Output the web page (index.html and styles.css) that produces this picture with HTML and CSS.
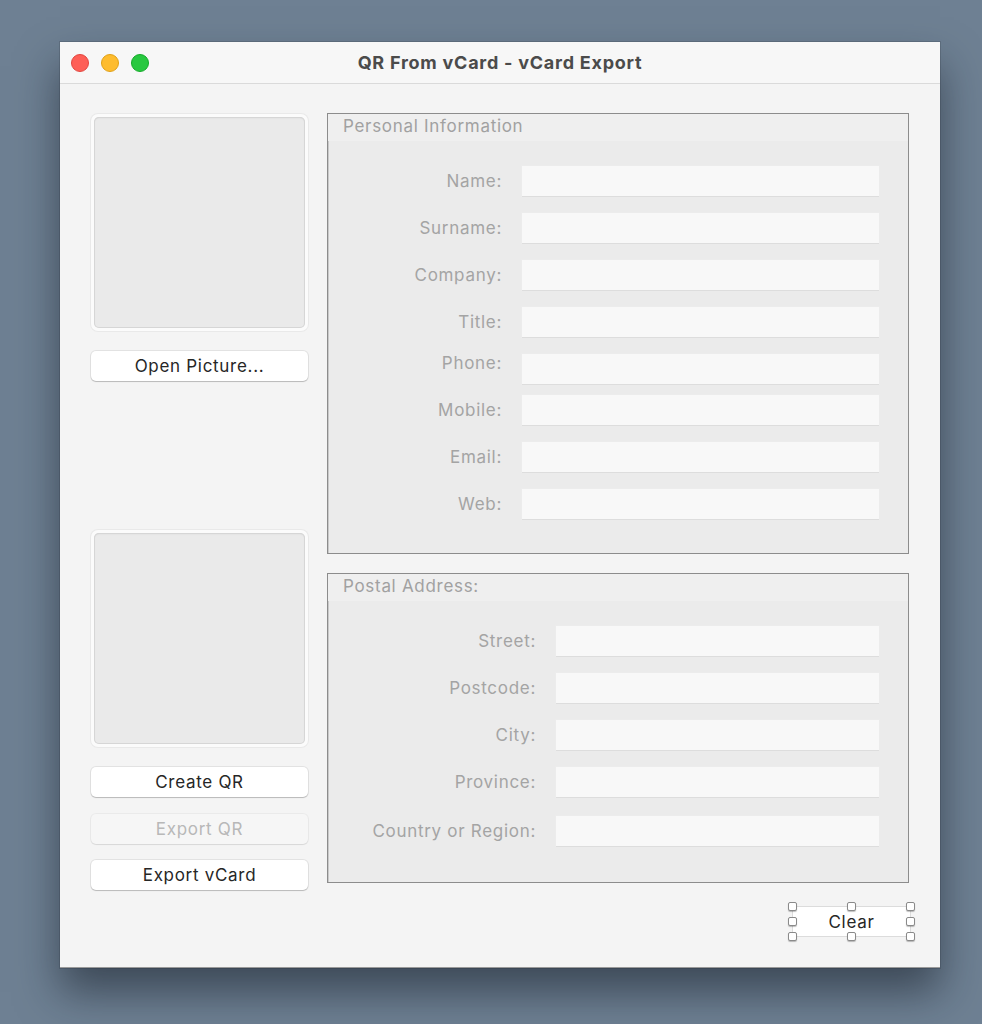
FILE: index.html
```html
<!DOCTYPE html>
<html lang="en">
<head>
    <meta charset="UTF-8">
    <meta name="viewport" content="width=device-width, initial-scale=1.0">
    <title>QR From vCard - vCard Export</title>
    <link rel="stylesheet" href="styles.css">
</head>
<body>

    <div class="window">
        <div class="titlebar">
            <div class="lights">
                <span class="light red"></span>
                <span class="light yellow"></span>
                <span class="light green"></span>
            </div>
            <div class="title">QR From vCard - vCard Export</div>
        </div>

        <div class="content">
            <div class="left-col">
                <div class="picture-well"><div class="well-inner"></div></div>
                <button class="push-btn open-btn">Open Picture...</button>

                <div class="picture-well qr-well"><div class="well-inner"></div></div>
                <button class="push-btn create-btn">Create QR</button>
                <button class="push-btn export-qr" disabled>Export QR</button>
                <button class="push-btn export-vcard">Export vCard</button>
            </div>

            <div class="right-col">
                <div class="group-box personal">
                    <div class="group-title">Personal Information</div>
                    <div class="fields">
                        <div class="field-row"><label>Name:</label><div class="text-field"></div></div>
                        <div class="field-row"><label>Surname:</label><div class="text-field"></div></div>
                        <div class="field-row"><label>Company:</label><div class="text-field"></div></div>
                        <div class="field-row"><label>Title:</label><div class="text-field"></div></div>
                        <div class="field-row tight"><label class="raised">Phone:</label><div class="text-field"></div></div>
                        <div class="field-row"><label>Mobile:</label><div class="text-field"></div></div>
                        <div class="field-row"><label>Email:</label><div class="text-field"></div></div>
                        <div class="field-row"><label>Web:</label><div class="text-field"></div></div>
                    </div>
                </div>

                <div class="group-box postal">
                    <div class="group-title">Postal Address:</div>
                    <div class="fields">
                        <div class="field-row"><label>Street:</label><div class="text-field"></div></div>
                        <div class="field-row"><label>Postcode:</label><div class="text-field"></div></div>
                        <div class="field-row"><label>City:</label><div class="text-field"></div></div>
                        <div class="field-row wide-gap"><label>Province:</label><div class="text-field"></div></div>
                        <div class="field-row"><label>Country or Region:</label><div class="text-field"></div></div>
                    </div>
                </div>

                <div class="clear-row">
                    <div class="selected">
                        <button class="push-btn clear-btn">Clear</button>
                        <span class="handle h-tl"></span>
                        <span class="handle h-tm"></span>
                        <span class="handle h-tr"></span>
                        <span class="handle h-ml"></span>
                        <span class="handle h-mr"></span>
                        <span class="handle h-bl"></span>
                        <span class="handle h-bm"></span>
                        <span class="handle h-br"></span>
                    </div>
                </div>
            </div>
        </div>
    </div>

</body>
</html>
```

FILE: styles.css
```css
body {
    margin: 0;
    padding-top: 42px;
    height: 1024px;
    box-sizing: border-box;
    background-color: #6e8093;
    font-family: Inter, "Liberation Sans", sans-serif;
}

.window {
    width: 880px;
    height: 926px;
    margin-left: 60px;
    background-color: #f4f4f4;
    box-sizing: border-box;
    border-bottom: 1px solid #9a9a9a;
    box-shadow: 0 24px 40px rgba(20, 28, 38, 0.55), 0 0 0 1px rgba(0, 0, 0, 0.12);
}

/* title bar */
.titlebar {
    height: 42px;
    box-sizing: border-box;
    border-bottom: 1px solid #dadada;
    background-color: #f7f7f7;
    display: flex;
    align-items: center;
    position: relative;
}

.lights {
    display: flex;
    gap: 12px;
    padding-left: 11px;
    padding-top: 1px;
    position: relative;
    z-index: 1;
}

.light {
    width: 18px;
    height: 18px;
    border-radius: 50%;
    box-sizing: border-box;
}

.red { background-color: #fe5f57; border: 1px solid #e2463f; }
.yellow { background-color: #febc2e; border: 1px solid #e1a116; }
.green { background-color: #28c840; border: 1px solid #13ab29; }

.title {
    position: absolute;
    left: 0;
    right: 0;
    text-align: center;
    font-size: 18px;
    font-weight: 700;
    color: #4b4b4b;
    letter-spacing: 0.75px;
}

/* content */
.content {
    display: flex;
    padding: 29px 31px 0 31px;
    gap: 19px;
}

.left-col {
    width: 217px;
    display: flex;
    flex-direction: column;
    margin-top: 1px;
}

.picture-well {
    width: 217px;
    height: 217px;
    box-sizing: border-box;
    padding: 3px;
    background-color: #fbfbfb;
    border-radius: 7px;
    box-shadow: 0 0 0 1px #e9e9e9;
}

.well-inner {
    height: 100%;
    border-radius: 5px;
    background-color: #eaeaea;
    box-shadow: inset 0 0 0 1px #d6d6d6, inset 0 1px 2px rgba(0, 0, 0, 0.08);
}

.qr-well { margin-top: 149px; }

.push-btn {
    width: 217px;
    height: 30px;
    border: none;
    border-radius: 5px;
    background-color: #ffffff;
    box-shadow: 0 0 0 1px rgba(0, 0, 0, 0.07), 0 1px 1px rgba(0, 0, 0, 0.18);
    font-family: Inter, "Liberation Sans", sans-serif;
    font-size: 17px;
    letter-spacing: 0.7px;
    color: #262626;
    padding: 0;
    cursor: pointer;
}

.open-btn { margin-top: 20px; }
.create-btn { margin-top: 20px; }
.export-qr {
    margin-top: 17px;
    background-color: #f6f6f6;
    color: #b8b8b8;
    box-shadow: 0 0 0 1px rgba(0, 0, 0, 0.04), 0 1px 1px rgba(0, 0, 0, 0.08);
}
.export-vcard { margin-top: 16px; }

/* group boxes */
.right-col {
    width: 582px;
    display: flex;
    flex-direction: column;
}

.group-box {
    border: 1px solid #8c8c8c;
    box-shadow: inset 1px 1px 0 #c9c9c9;
    background-color: #ebebeb;
    box-sizing: border-box;
}

.personal { height: 441px; }
.postal { height: 310px; margin-top: 19px; }

.group-title {
    height: 27px;
    background-color: #efefef;
    padding-left: 15px;
    font-size: 17px;
    letter-spacing: 0.7px;
    line-height: 24px;
    color: #a1a1a1;
}

.fields {
    padding-top: 25px;
    padding-right: 29px;
}

.field-row {
    display: flex;
    align-items: center;
    margin-bottom: 17px;
}

.field-row.tight { margin-bottom: 11px; }
.field-row.wide-gap { margin-bottom: 19px; }

.field-row label {
    width: 174px;
    text-align: right;
    margin-right: 20px;
    font-size: 17px;
    letter-spacing: 0.7px;
    color: #a4a4a4;
}

.postal .field-row label { width: 208px; }

.field-row label.raised { position: relative; top: -6px; }

.text-field {
    flex: 1;
    height: 30px;
    background-color: #f8f8f8;
    box-shadow: 0 1px 0 #dddddd, 0 0 0 1px #ececec;
}

/* clear button with selection handles */
.clear-row {
    display: flex;
    justify-content: flex-end;
    margin-top: 24px;
    margin-right: -1px;
}

.selected {
    position: relative;
    width: 117px;
    height: 29px;
}

.clear-btn {
    width: 117px;
    height: 29px;
    border-radius: 2px;
    box-shadow: 0 0 0 1px #dcdcdc;
}

.handle {
    position: absolute;
    width: 9px;
    height: 9px;
    background-color: #ffffff;
    border: 1px solid #8a8a8a;
    border-radius: 2px;
    box-sizing: border-box;
    box-shadow: 0 1px 1px rgba(0, 0, 0, 0.25);
}

.h-tl { left: -5px; top: -5px; }
.h-tm { left: 54px; top: -5px; }
.h-tr { right: -5px; top: -5px; }
.h-ml { left: -5px; top: 10px; }
.h-mr { right: -5px; top: 10px; }
.h-bl { left: -5px; bottom: -5px; }
.h-bm { left: 54px; bottom: -5px; }
.h-br { right: -5px; bottom: -5px; }
```
